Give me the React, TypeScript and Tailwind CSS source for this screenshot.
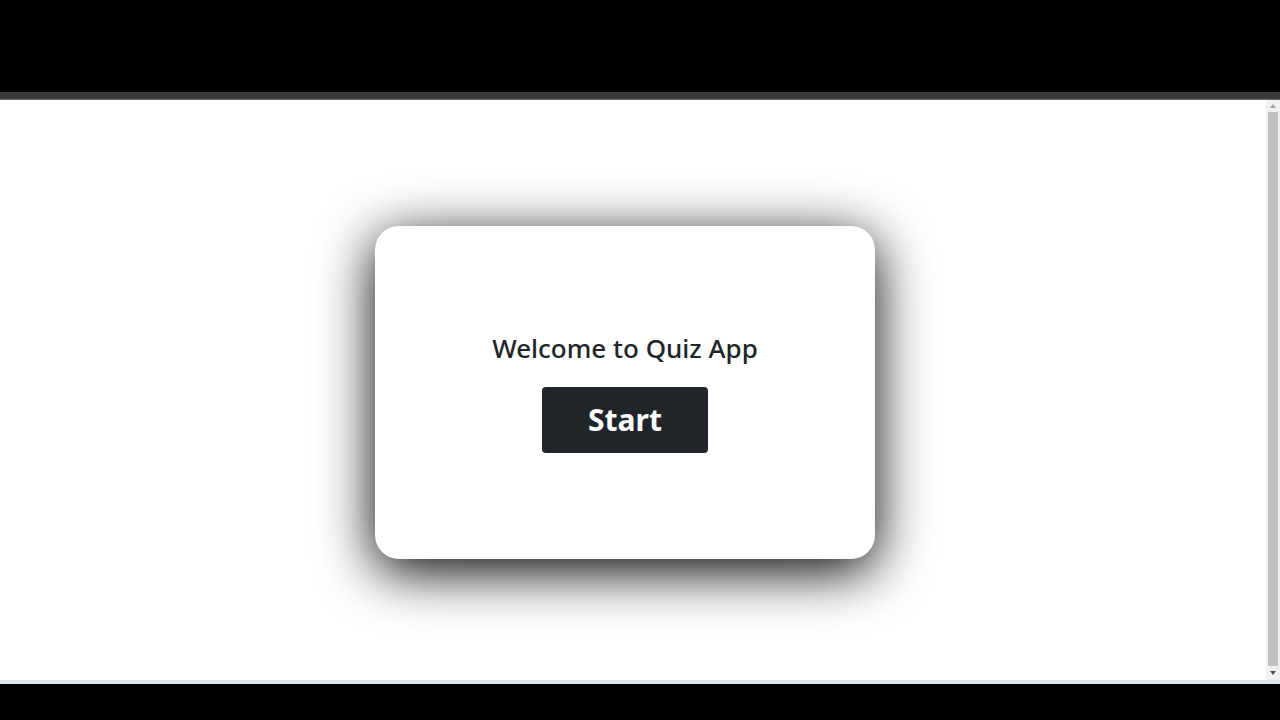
const App = () => {
  return (
    <div className="h-[720px] w-[1280px] bg-black flex flex-col overflow-hidden" style={{ fontFamily: '"Noto Sans", "Open Sans", sans-serif' }}>
      <div className="h-[92px] bg-black" />
      <div className="h-[8px] bg-[#3a3a3a] border-b border-[#6a6a6a]" />

      <div className="h-[580px] flex bg-white">
        <main className="flex-1 flex items-center justify-center pr-[16px] pt-[5px]">
          <div className="w-[500px] h-[333px] bg-white rounded-[24px] shadow-[0_12px_55px_rgba(0,0,0,1)] flex flex-col items-center justify-center">
            <h3 className="text-[26px] leading-tight font-medium text-[#212529] mb-[22px]">Welcome to Quiz App</h3>
            <button className="w-[166px] h-[66px] bg-[#212529] text-white text-[30px] font-bold rounded-[4px]">
              Start
            </button>
          </div>
        </main>

        <div className="w-[14px] bg-[#f1f1f1] flex flex-col items-center">
          <div className="h-[12px] flex items-center justify-center">
            <div className="w-0 h-0 border-l-[3px] border-r-[3px] border-b-[4px] border-l-transparent border-r-transparent border-b-[#a3a3a3]" />
          </div>
          <div className="flex-1 w-[10px] bg-[#c1c1c1]" />
          <div className="h-[14px] flex items-center justify-center">
            <div className="w-0 h-0 border-l-[3px] border-r-[3px] border-t-[4px] border-l-transparent border-r-transparent border-t-[#505050]" />
          </div>
        </div>
      </div>

      <div className="h-[4px] bg-[#dfe6f0]" />
      <div className="flex-1 bg-black" />
    </div>
  );
};

export default App;
